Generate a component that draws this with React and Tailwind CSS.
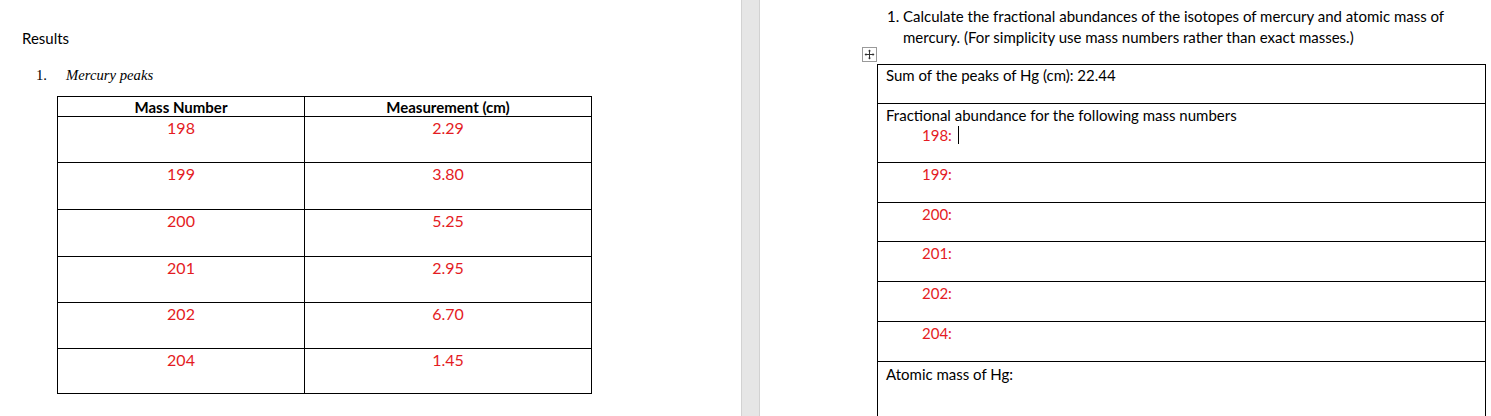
import React from 'react';

const PEAKS = [
  ['198', '2.29', 'h-[46px]'],
  ['199', '3.80', 'h-[47px]'],
  ['200', '5.25', 'h-[47px]'],
  ['201', '2.95', 'h-[46px]'],
  ['202', '6.70', 'h-[46px]'],
  ['204', '1.45', 'h-[45px]'],
];

const LABELS = [
  ['199:', 'h-[40px]'],
  ['200:', 'h-[39px]'],
  ['201:', 'h-[40px]'],
  ['202:', 'h-[40px]'],
  ['204:', 'h-[40px]'],
];

function MoveHandle() {
  return (
    <svg width="15" height="15" viewBox="0 0 15 15" className="block">
      <rect x="0.5" y="0.5" width="14" height="14" fill="white" stroke="#9a9a9a" />
      <path d="M7.5 3v9M3 7.5h9" stroke="#333" strokeWidth="1" />
      <path d="M7.5 2.5l-1.5 1.8h3zM7.5 12.5l-1.5-1.8h3zM2.5 7.5l1.8-1.5v3zM12.5 7.5l-1.8-1.5v3z" fill="#333" />
    </svg>
  );
}

export default function App() {
  const sans = { fontFamily: 'Lato, "Open Sans", sans-serif' };
  return (
    <div className="flex w-[1491px] h-[416px] overflow-hidden bg-white text-black" style={sans}>
      {/* Left page */}
      <div className="w-[741px] shrink-0 pt-[29px] pl-[22px]">
        <p className="text-[15px] leading-[18px]">Results</p>
        <div className="flex items-center mt-[19px] ml-[14px] h-[18px] text-[14.7px]" style={{ fontFamily: '"Liberation Serif", serif' }}>
          <span className="w-[30px]">1.</span>
          <span className="italic">Mercury peaks</span>
        </div>
        <table className="mt-[12px] ml-[35px] w-[535px] border-collapse table-fixed">
          <colgroup>
            <col className="w-[247px]" />
            <col />
          </colgroup>
          <thead>
            <tr className="h-[20px]">
              <th className="border border-black text-[15px] font-bold leading-[18px] pt-px pb-0 align-top">Mass Number</th>
              <th className="border border-black text-[15px] font-bold leading-[18px] pt-px pb-0 align-top">Measurement (cm)</th>
            </tr>
          </thead>
          <tbody>
            {PEAKS.map(([m, v, h]) => (
              <tr key={m} className={h}>
                <td className="border border-black align-top text-center text-[16px] leading-[20px] pt-px text-[#e41b23]">{m}</td>
                <td className="border border-black align-top text-center text-[16px] leading-[20px] pt-px text-[#e41b23]">{v}</td>
              </tr>
            ))}
          </tbody>
        </table>
      </div>

      {/* Gap between pages */}
      <div className="w-[19px] shrink-0 bg-[#e6e6e6] border-x border-[#d2d2d2]" />

      {/* Right page */}
      <div className="flex-1 pt-[6px]">
        <div className="flex ml-[127px] text-[15px] leading-[21px]">
          <span className="w-[16px] shrink-0">1.</span>
          <p>
            Calculate the fractional abundances of the isotopes of mercury and atomic mass of
            <br />
            mercury. (For simplicity use mass numbers rather than exact masses.)
          </p>
        </div>
        <div className="ml-[102px] -mt-px">
          <MoveHandle />
        </div>
        <div className="ml-[117px] mt-[2px] w-[609px] border-x border-t border-black text-[15px] leading-[18px]">
          <div className="h-[39px] border-b border-black pl-[8px] pt-px">Sum of the peaks of Hg (cm): 22.44</div>
          <div className="h-[59px] border-b border-black pl-[8px] pt-[2px]">
            <p>Fractional abundance for the following mass numbers</p>
            <p className="flex items-center pl-[36px] mt-[2px]">
              <span className="text-[#e41b23]">198:</span>
              <span className="ml-[6px] w-px h-[18px] bg-black" />
            </p>
          </div>
          {LABELS.map(([l, h]) => (
            <div key={l} className={`${h} border-b border-black pl-[44px] pt-[2px] text-[#e41b23]`}>{l}</div>
          ))}
          <div className="h-[60px] pl-[8px] pt-[3px]">Atomic mass of Hg:</div>
        </div>
      </div>
    </div>
  );
}
